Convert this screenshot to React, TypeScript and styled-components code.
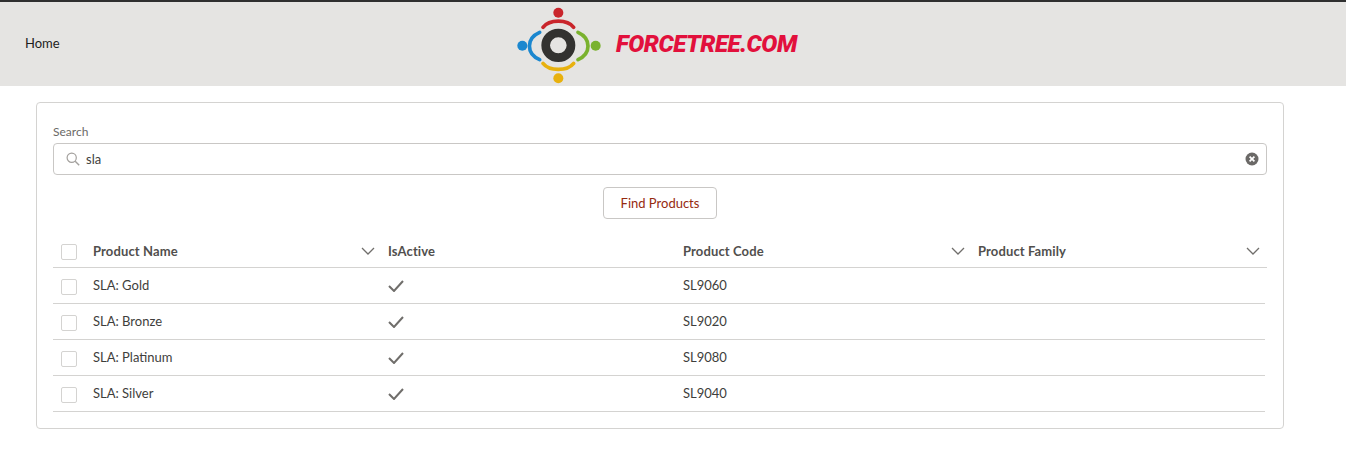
import React from "react";
import styled, { createGlobalStyle } from "styled-components";

const products = [
  { name: "SLA: Gold", code: "SL9060" },
  { name: "SLA: Bronze", code: "SL9020" },
  { name: "SLA: Platinum", code: "SL9080" },
  { name: "SLA: Silver", code: "SL9040" },
];

const columns = [
  { label: "Product Name", sortable: true },
  { label: "IsActive", sortable: false },
  { label: "Product Code", sortable: true },
  { label: "Product Family", sortable: true },
];

const Chevron = () => (
  <ChevronIcon viewBox="0 0 14 8" aria-hidden="true">
    <path d="M1 1l6 6 6-6" fill="none" stroke="#706e6b" strokeWidth="1.3" />
  </ChevronIcon>
);

const Logo = () => (
  <LogoMark viewBox="0 0 300 240" aria-hidden="true">
    <ellipse cx="145" cy="121" rx="38" ry="37" fill="none" stroke="#333230" strokeWidth="26" />
    <g fill="none" strokeWidth="11" strokeLinecap="round">
      <path d="M99 67C118 42 172 42 191 67" stroke="#c9252b" />
      <path d="M89 82C48 100 48 146 89 164" stroke="#1b87cf" />
      <path d="M204 82C244 100 244 146 204 164" stroke="#7ab22e" />
      <path d="M99 175C118 199 172 199 191 175" stroke="#e8b10e" />
    </g>
    <circle cx="145" cy="23" r="15" fill="#c9252b" />
    <circle cx="37" cy="122" r="15" fill="#1b87cf" />
    <circle cx="257" cy="122" r="15" fill="#7ab22e" />
    <circle cx="145" cy="220" r="15" fill="#e8b10e" />
  </LogoMark>
);

export default function App() {
  return (
    <>
      <GlobalStyle />
      <Header>
        <HomeLink>Home</HomeLink>
        <Brand>
          <Logo />
          <BrandName>FORCETREE.COM</BrandName>
        </Brand>
      </Header>
      <Card>
        <FieldLabel>Search</FieldLabel>
        <SearchBox>
          <svg width="14" height="14" viewBox="0 0 14 14" aria-hidden="true">
            <circle cx="5.7" cy="5.7" r="4.6" fill="none" stroke="#a3a09d" strokeWidth="1.2" />
            <path d="M9.2 9.2l4 4" stroke="#a3a09d" strokeWidth="1.4" />
          </svg>
          <SearchValue>sla</SearchValue>
          <svg width="14" height="14" viewBox="0 0 14 14" aria-hidden="true">
            <circle cx="7" cy="7" r="6.5" fill="#6b6967" />
            <path d="M4.6 4.6l4.8 4.8M9.4 4.6l-4.8 4.8" stroke="#fff" strokeWidth="1.7" />
          </svg>
        </SearchBox>
        <ButtonRow>
          <FindButton>Find Products</FindButton>
        </ButtonRow>
        <HeadRow>
          <CheckCell>
            <Checkbox />
          </CheckCell>
          {columns.map((column) => (
            <HeadCell key={column.label}>
              {column.label}
              {column.sortable && <Chevron />}
            </HeadCell>
          ))}
        </HeadRow>
        {products.map((product) => (
          <BodyRow key={product.code}>
            <CheckCell>
              <Checkbox />
            </CheckCell>
            <BodyCell>{product.name}</BodyCell>
            <BodyCell>
              <CheckMark viewBox="0 0 16 12" aria-hidden="true">
                <path d="M1 6l5 5L15 1" fill="none" stroke="#706e6b" strokeWidth="2" />
              </CheckMark>
            </BodyCell>
            <BodyCell>{product.code}</BodyCell>
            <BodyCell />
          </BodyRow>
        ))}
      </Card>
    </>
  );
}

const GlobalStyle = createGlobalStyle`
  html, body {
    margin: 0;
    background: #fff;
    color: #3e3e3c;
    font-family: "Lato", "Liberation Sans", sans-serif;
    font-size: 13px;
  }
`;

const Header = styled.header`
  display: flex;
  align-items: center;
  height: 84px;
  padding-left: 25px;
  background: #e5e4e2;
  border-top: 2px solid #2f2f2f;
`;

const HomeLink = styled.span`
  width: 485px;
  margin-top: -3px;
  color: #1d1d1d;
`;

const Brand = styled.div`
  display: flex;
  align-items: center;
  height: 80px;
  margin-top: 2px;
`;

const LogoMark = styled.svg`
  width: 100px;
  height: 80px;
  flex: none;
`;

const BrandName = styled.span`
  margin-left: 6px;
  margin-top: -3px;
  color: #e2103c;
  font-family: "Roboto", "Liberation Sans", sans-serif;
  font-size: 24px;
  font-style: italic;
  font-weight: 900;
  letter-spacing: -0.5px;
`;

const Card = styled.main`
  width: 1248px;
  height: 327px;
  box-sizing: border-box;
  margin: 16px 0 0 36px;
  padding: 21px 16px 0;
  border: 1px solid #d4d3d1;
  border-radius: 4px;
`;

const FieldLabel = styled.div`
  height: 19px;
  color: #6b6967;
  font-size: 12px;
  line-height: 16px;
`;

const SearchBox = styled.div`
  display: flex;
  align-items: center;
  height: 32px;
  box-sizing: border-box;
  padding: 0 7px 0 12px;
  border: 1px solid #c9c7c5;
  border-radius: 4px;
`;

const SearchValue = styled.span`
  flex: 1;
  margin-left: 6px;
`;

const ButtonRow = styled.div`
  display: flex;
  justify-content: center;
  margin-top: 12px;
`;

const FindButton = styled.button`
  width: 114px;
  height: 32px;
  padding: 0;
  background: #fff;
  border: 1px solid #c9c7c5;
  border-radius: 4px;
  color: #962a0f;
  font: inherit;
`;

const Row = styled.div`
  display: grid;
  grid-template-columns: 40px 295px 295px 295px 1fr;
  align-items: center;
  box-sizing: border-box;
  border-bottom: 1px solid #d4d3d1;
`;

const HeadRow = styled(Row)`
  height: 33px;
  margin-top: 16px;
`;

const BodyRow = styled(Row)`
  height: 36px;
  margin-right: 2px;
`;

const CheckCell = styled.div`
  padding: 2px 0 0 8px;
`;

const Checkbox = styled.div`
  width: 16px;
  height: 16px;
  box-sizing: border-box;
  background: #fff;
  border: 1px solid #d4d3d1;
  border-radius: 2px;
`;

const HeadCell = styled.div`
  display: flex;
  align-items: center;
  justify-content: space-between;
  padding-right: 13px;
  color: #514f4d;
  font-weight: 700;
  letter-spacing: 0.12px;

  &:last-child {
    padding-right: 7px;
  }
`;

const BodyCell = styled.div`
  display: flex;
  align-items: center;
  height: 100%;
  margin-top: -2px;
`;

const ChevronIcon = styled.svg`
  width: 14px;
  height: 8px;
`;

const CheckMark = styled.svg`
  width: 16px;
  height: 12px;
  margin-top: 3px;
`;
